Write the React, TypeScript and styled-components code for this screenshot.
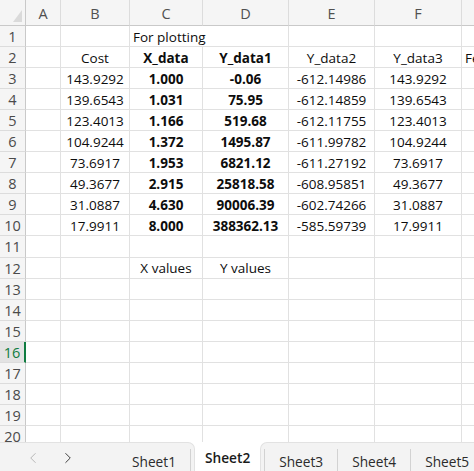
import styled, { createGlobalStyle } from "styled-components";
import { ChevronLeft, ChevronRight } from "lucide-react";

const GlobalStyle = createGlobalStyle`
  html, body {
    margin: 0;
    padding: 0;
    background: #ffffff;
  }
  body {
    font-family: "Open Sans", "Liberation Sans", sans-serif;
    width: 474px;
    height: 471px;
    overflow: hidden;
  }
`;

const ROW_H = 21.05;
const COLS = ["A", "B", "C", "D", "E", "F", "G"];

const Page = styled.div`
  display: flex;
  flex-direction: column;
  width: 474px;
  height: 471px;
  overflow: hidden;
`;

const Sheet = styled.div`
  height: 443px;
  overflow: hidden;
  display: grid;
  grid-template-columns: 26px 35px 69px 73px 86px 86px 87px 60px;
  grid-template-rows: 26px repeat(20, ${ROW_H}px);
`;

const Corner = styled.div`
  position: relative;
  background: #f5f5f5;
  border-right: 1px solid #c9c9c9;
  border-bottom: 1px solid #c9c9c9;
  box-sizing: border-box;

  &::after {
    content: "";
    position: absolute;
    right: 3px;
    bottom: 3px;
    width: 0;
    height: 0;
    border-left: 9px solid transparent;
    border-bottom: 12px solid #dadada;
  }
`;

const ColHeader = styled.div`
  display: flex;
  align-items: center;
  justify-content: center;
  background: #f5f5f5;
  border-right: 1px solid #dcdcdc;
  border-bottom: 1px solid #c9c9c9;
  box-sizing: border-box;
  font-size: 14.5px;
  color: #505050;
  padding-top: 1px;
`;

const RowHeader = styled.div<{ $selected?: boolean }>`
  display: flex;
  align-items: center;
  justify-content: center;
  box-sizing: border-box;
  border-bottom: 1px solid #dcdcdc;
  font-size: 14.5px;
  padding-top: 1px;
  ${({ $selected }) =>
    $selected
      ? `
    background: #e3e3e3;
    color: #107c41;
    border-right: 2px solid #107c41;
  `
      : `
    background: #f5f5f5;
    color: #4a4a4a;
    border-right: 1px solid #c9c9c9;
  `}
`;

const Cell = styled.div<{ $align?: "left" | "center"; $bold?: boolean; $open?: boolean }>`
  display: flex;
  align-items: center;
  justify-content: ${({ $align }) => ($align === "left" ? "flex-start" : "center")};
  padding: 1px ${({ $align }) => ($align === "left" ? "3px" : "0")} 0;
  box-sizing: border-box;
  border-right: ${({ $open }) => ($open ? "none" : "1px solid #e1e1e1")};
  border-bottom: 1px solid #e1e1e1;
  font-size: 13.5px;
  font-weight: ${({ $bold }) => ($bold ? 700 : 400)};
  color: #0d0d0d;
  white-space: nowrap;
  overflow: visible;
  position: relative;
  z-index: 1;
`;

const TabBar = styled.div`
  flex: 1;
  display: flex;
  align-items: stretch;
  background: #ffffff;
`;

const TabGroup = styled.div<{ $side: "left" | "right" }>`
  display: flex;
  align-items: stretch;
  background: #f3f3f3;
  border-top: 1px solid #e2e2e2;
  ${({ $side }) =>
    $side === "left"
      ? `
    border-right: 1px solid #e2e2e2;
    border-top-right-radius: 7px;
    padding-right: 3px;
  `
      : `
    flex: 1;
    border-left: 1px solid #e2e2e2;
    border-top-left-radius: 7px;
    padding-left: 3px;
  `}
`;

const Nav = styled.div`
  width: 103px;
  padding-left: 15px;
  display: flex;
  align-items: center;
`;

const NavButton = styled.div<{ $disabled?: boolean }>`
  width: 35px;
  display: flex;
  justify-content: center;
  align-items: center;
  padding-top: 2px;
  color: ${({ $disabled }) => ($disabled ? "#b5b5b5" : "#3a3a3a")};
`;

const Tab = styled.div<{ $sep?: "left" | "right" }>`
  display: flex;
  align-items: center;
  padding: 3px 14px 0;
  margin: 6px 0 0;
  font-size: 13.7px;
  color: #2b2b2b;
  white-space: nowrap;
  ${({ $sep }) =>
    $sep === "left"
      ? "border-left: 1px solid #d2d2d2;"
      : $sep === "right"
      ? "border-right: 1px solid #d2d2d2;"
      : ""}
`;

const ActiveTab = styled.div`
  display: flex;
  align-items: center;
  padding: 3px 10px 0;
  font-size: 13.7px;
  font-weight: 600;
  color: #1a1a1a;
  white-space: nowrap;
`;

const TabLabel = styled.span`
  position: relative;
  padding-bottom: 1px;

  &::after {
    content: "";
    position: absolute;
    left: 0;
    right: 0;
    bottom: -5px;
    height: 2px;
    border-radius: 1px;
    background: #107c41;
    box-shadow: 0 1px 0 #a9dcc1;
  }
`;

type CellDef = { text?: string; bold?: boolean; align?: "left" | "center"; open?: boolean };

const cost = ["143.9292", "139.6543", "123.4013", "104.9244", "73.6917", "49.3677", "31.0887", "17.9911"];
const xData = ["1.000", "1.031", "1.166", "1.372", "1.953", "2.915", "4.630", "8.000"];
const y1 = ["-0.06", "75.95", "519.68", "1495.87", "6821.12", "25818.58", "90006.39", "388362.13"];
const y2 = ["-612.14986", "-612.14859", "-612.11755", "-611.99782", "-611.27192", "-608.95851", "-602.74266", "-585.59739"];

function buildRows(): CellDef[][] {
  const rows: CellDef[][] = [];
  for (let r = 1; r <= 20; r++) {
    const row: CellDef[] = COLS.map(() => ({}));
    if (r === 1) {
      row[2] = { text: "For plotting", align: "left", open: true };
    } else if (r === 2) {
      row[1] = { text: "Cost" };
      row[2] = { text: "X_data", bold: true };
      row[3] = { text: "Y_data1", bold: true };
      row[4] = { text: "Y_data2" };
      row[5] = { text: "Y_data3" };
      row[6] = { text: "Fe", align: "left" };
    } else if (r >= 3 && r <= 10) {
      const i = r - 3;
      row[1] = { text: cost[i] };
      row[2] = { text: xData[i], bold: true };
      row[3] = { text: y1[i], bold: true };
      row[4] = { text: y2[i] };
      row[5] = { text: cost[i] };
    } else if (r === 12) {
      row[2] = { text: "X values" };
      row[3] = { text: "Y values" };
    }
    rows.push(row);
  }
  return rows;
}

export default function App() {
  const rows = buildRows();

  return (
    <>
      <GlobalStyle />
      <Page>
        <Sheet>
          <Corner />
          {COLS.map((c) => (
            <ColHeader key={c}>{c}</ColHeader>
          ))}
          {rows.map((row, ri) => [
            <RowHeader key={`h${ri}`} $selected={ri + 1 === 16}>
              {ri + 1}
            </RowHeader>,
            ...row.map((cell, ci) => (
              <Cell
                key={`${ri}-${ci}`}
                $align={cell.align}
                $bold={cell.bold}
                $open={cell.open}
              >
                {cell.text}
              </Cell>
            )),
          ])}
        </Sheet>

        <TabBar>
          <TabGroup $side="left">
            <Nav>
              <NavButton $disabled>
                <ChevronLeft size={18} strokeWidth={1.3} />
              </NavButton>
              <NavButton>
                <ChevronRight size={18} strokeWidth={1.3} />
              </NavButton>
            </Nav>
            <Tab $sep="right">Sheet1</Tab>
          </TabGroup>
          <ActiveTab>
            <TabLabel>Sheet2</TabLabel>
          </ActiveTab>
          <TabGroup $side="right">
            <Tab $sep="left">Sheet3</Tab>
            <Tab $sep="left">Sheet4</Tab>
            <Tab $sep="left">Sheet5</Tab>
          </TabGroup>
        </TabBar>
      </Page>
    </>
  );
}
